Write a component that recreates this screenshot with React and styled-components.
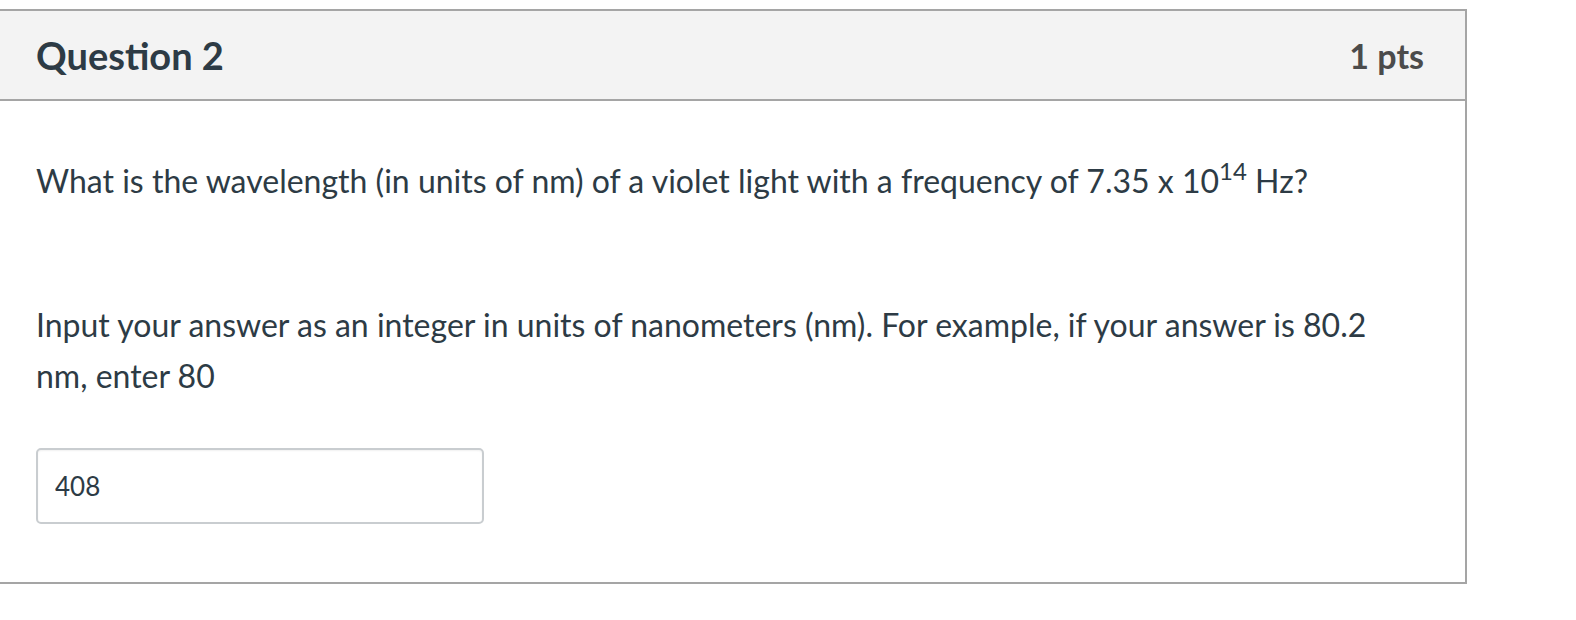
import React from 'react';
import styled, { createGlobalStyle } from 'styled-components';

const GlobalStyle = createGlobalStyle`
  html, body {
    margin: 0;
    padding: 0;
    background: #fff;
  }
  body {
    font-family: Lato, "Noto Sans", "Liberation Sans", sans-serif;
    color: #2d3b45;
    overflow: hidden;
  }
`;

const Page = styled.div`
  width: 1576px;
  height: 620px;
  padding-top: 9px;
  box-sizing: border-box;
`;

const Card = styled.section`
  margin-left: -2px;
  width: 1469px;
  box-sizing: border-box;
  border: 2px solid #a5a5a5;
  background: #fff;
`;

const Header = styled.header`
  display: flex;
  align-items: center;
  justify-content: space-between;
  height: 90px;
  padding: 0 41px 0 36px;
  box-sizing: border-box;
  background: #f3f3f3;
  border-bottom: 2px solid #a5a5a5;
`;

const Title = styled.h2`
  margin: 0;
  font-size: 38px;
  font-weight: 700;
  color: #2d3b45;
`;

const Points = styled.span`
  font-size: 34px;
  font-weight: 700;
  color: #4b4b4b;
`;

const Body = styled.div`
  padding: 54px 40px 58px 36px;
`;

const Paragraph = styled.p`
  margin: 0 0 ${(p) => p.$gap || 0}px;
  max-width: 1340px;
  font-size: 32px;
  line-height: 51px;
  color: #2d3b45;
`;

const Sup = styled.sup`
  font-size: 0.75em;
  line-height: 0;
  vertical-align: 0.55em;
`;

const Answer = styled.input`
  display: block;
  width: 448px;
  height: 76px;
  box-sizing: border-box;
  padding: 0 17px;
  border: 2px solid #c9cdd0;
  border-radius: 5px;
  box-shadow: inset 0 1px 2px rgba(0, 0, 0, 0.06);
  font-family: Lato, "Noto Sans", sans-serif;
  font-size: 26px;
  color: #2d3b45;
  background: #fff;
  outline: none;
`;

export default function App() {
  return (
    <Page>
      <GlobalStyle />
      <Card>
        <Header>
          <Title>Question 2</Title>
          <Points>1 pts</Points>
        </Header>
        <Body>
          <Paragraph $gap={93}>
            What is the wavelength (in units of nm) of a violet light with a frequency of 7.35 x 10<Sup>14</Sup> Hz?
          </Paragraph>
          <Paragraph $gap={47}>
            Input your answer as an integer in units of nanometers (nm). For example, if your answer is 80.2 nm, enter 80
          </Paragraph>
          <Answer defaultValue="408" aria-label="Answer" />
        </Body>
      </Card>
    </Page>
  );
}
